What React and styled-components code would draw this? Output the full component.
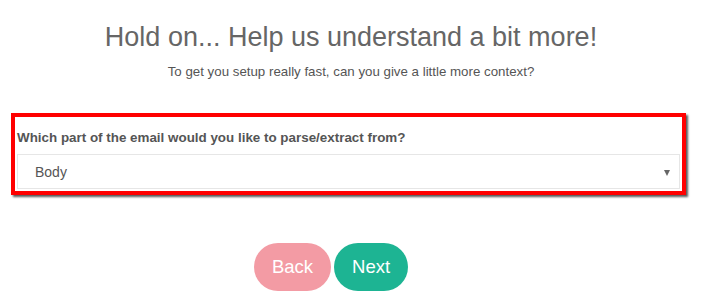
import React from "react";
import styled, { createGlobalStyle } from "styled-components";

const Global = createGlobalStyle`
  html, body { margin: 0; padding: 0; background: #fff; }
  body { font-family: "Liberation Sans", Arial, sans-serif; }
`;

const Page = styled.div`
  width: 702px;
  height: 307px;
  display: flex;
  flex-direction: column;
  align-items: center;
  overflow: hidden;
`;

const Title = styled.h1`
  margin: 20px 0 0;
  font-size: 27px;
  font-weight: 400;
  line-height: 34px;
  color: #666;
`;

const Subtitle = styled.p`
  margin: 10px 0 0;
  font-size: 13.3px;
  line-height: 16px;
  color: #555;
`;

const Highlight = styled.div`
  align-self: flex-start;
  margin: 33px 0 0 11px;
  width: 675px;
  box-sizing: border-box;
  border: 4px solid #f00;
  box-shadow: 2px 2px 2px rgba(60, 60, 60, 0.85);
  padding: 13px 2px 2px;
  display: flex;
  flex-direction: column;
`;

const Label = styled.label`
  font-size: 13.4px;
  font-weight: 700;
  color: #555;
  line-height: 16px;
  margin-bottom: 8px;
`;

const Select = styled.div`
  height: 35px;
  box-sizing: border-box;
  border: 1px solid #e6e6e6;
  display: flex;
  align-items: center;
  justify-content: space-between;
  padding: 0 9px 0 17px;
  font-size: 14px;
  color: #555;
`;

const Caret = styled.span`
  width: 0;
  height: 0;
  border-left: 3px solid transparent;
  border-right: 3px solid transparent;
  border-top: 6px solid #666;
  margin-top: 2px;
`;

const Buttons = styled.div`
  display: flex;
  gap: 3px;
  margin: 48px 40px 0 0;
`;

const Pill = styled.button`
  height: 48px;
  padding: 0 ${(p) => p.$px}px;
  border: none;
  border-radius: 24px;
  background: ${(p) => p.$bg};
  color: #fff;
  font-family: "Liberation Sans", Arial, sans-serif;
  font-size: 18.5px;
  cursor: pointer;
`;

export default function App() {
  return (
    <>
      <Global />
      <Page>
        <Title>Hold on... Help us understand a bit more!</Title>
        <Subtitle>To get you setup really fast, can you give a little more context?</Subtitle>
        <Highlight>
          <Label>Which part of the email would you like to parse/extract from?</Label>
          <Select>
            <span>Body</span>
            <Caret />
          </Select>
        </Highlight>
        <Buttons>
          <Pill $bg="#f39ba4" $px={18}>Back</Pill>
          <Pill $bg="#1db493" $px={18}>Next</Pill>
        </Buttons>
      </Page>
    </>
  );
}
